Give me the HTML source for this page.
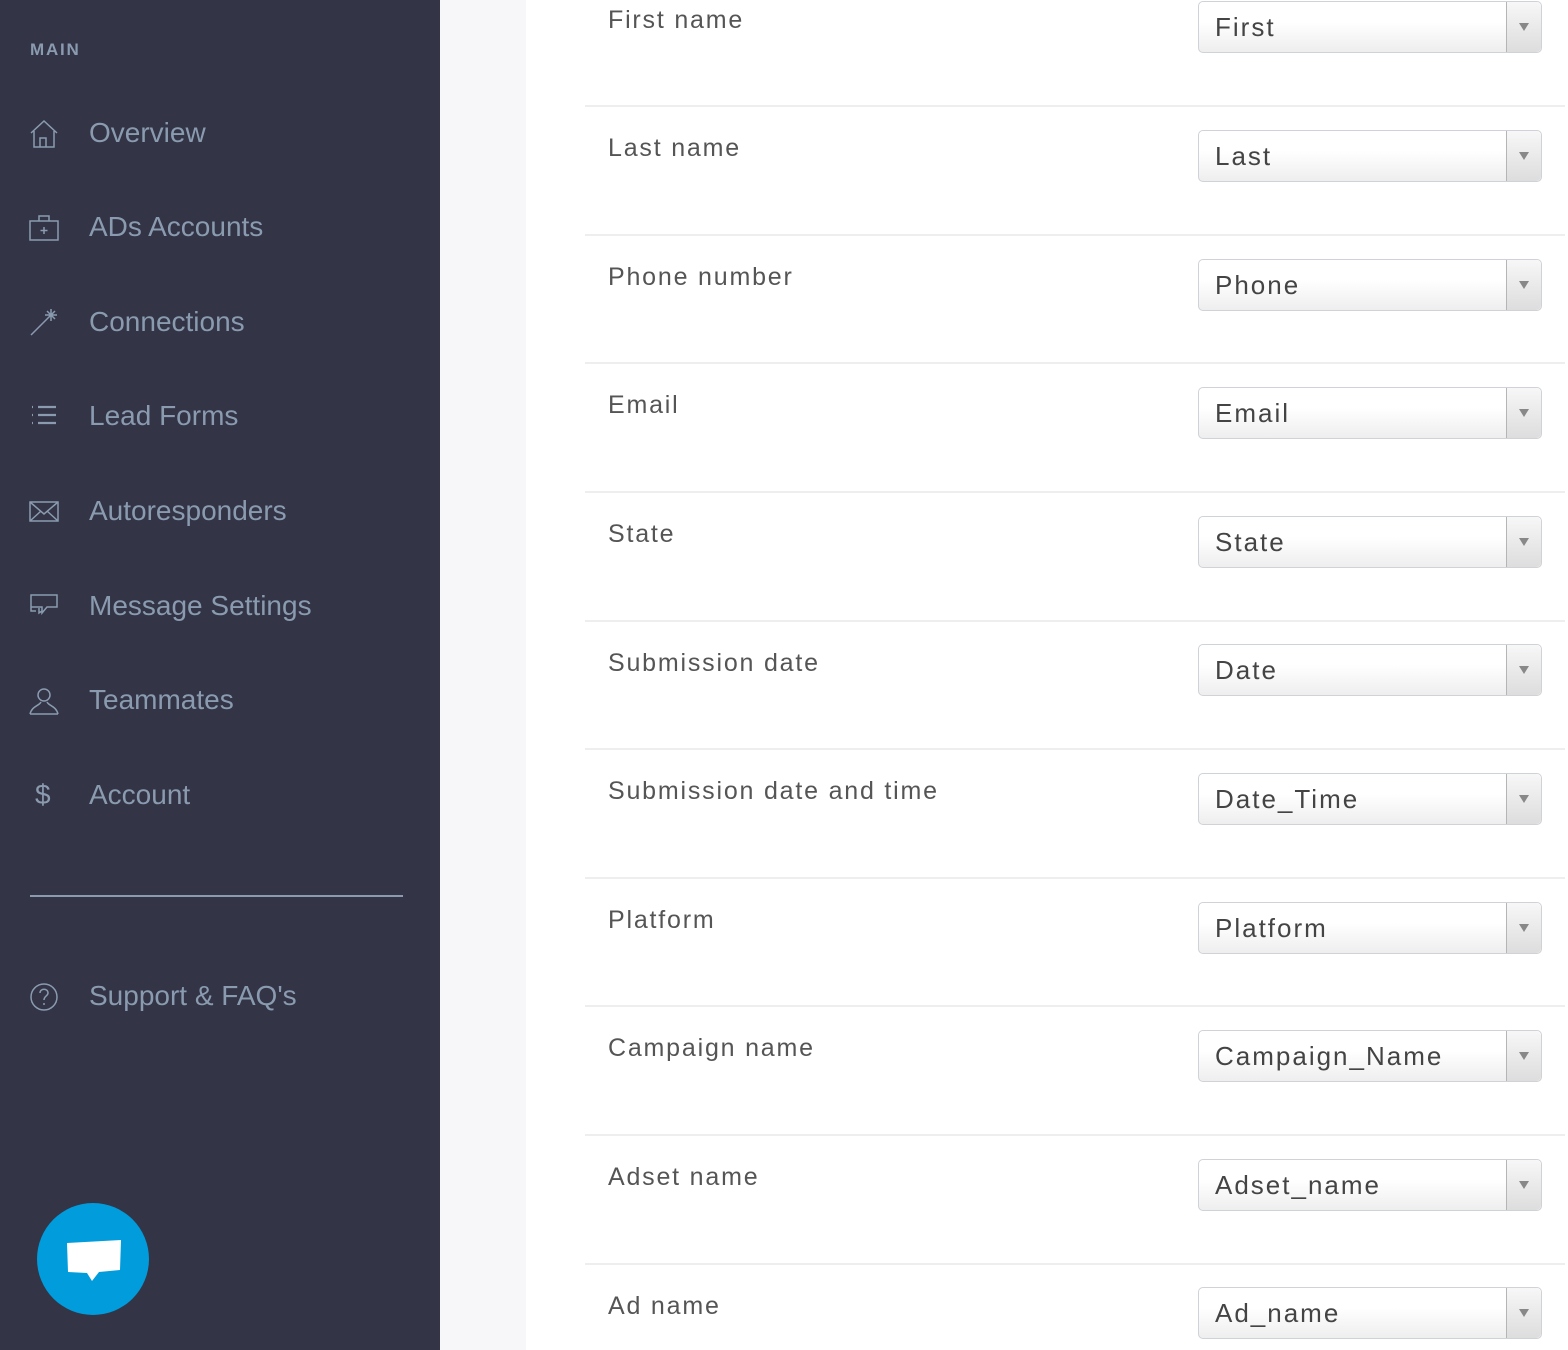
<!DOCTYPE html>
<html><head><style>
*{margin:0;padding:0;box-sizing:border-box}
body{width:1568px;height:1350px;position:relative;overflow:hidden;background:#fff;font-family:"Liberation Sans",sans-serif}
.sb{position:absolute;left:0;top:0;width:440px;height:1350px;background:#333446}
.gap{position:absolute;left:440px;top:0;width:86px;height:1350px;background:#f7f7f9}
.main-h{position:absolute;left:30px;top:40px;font-size:17px;font-weight:bold;color:#8a9bb0;letter-spacing:1.8px}
.nav{position:absolute;left:89px;font-size:28px;color:#8a9bb0;line-height:32px}
.ic{position:absolute;left:29px;width:30px;height:30px}
.ic svg{width:30px;height:30px;fill:none;stroke:#8a9bb0;stroke-width:1.5}
.hr{position:absolute;left:30px;top:895px;width:373px;height:2px;background:#8a9bb0}
.chat{position:absolute;left:37px;top:1203px;width:112px;height:112px;border-radius:50%;background:#009cdc}
.lbl{position:absolute;left:608px;font-size:25px;color:#555;line-height:30px;letter-spacing:1.8px}
.div{position:absolute;left:585px;width:980px;height:2px;background:#eeeeee}
.sel{position:absolute;left:1198px;width:344px;height:52px;border:1px solid #cfd2d6;border-radius:5px;background:linear-gradient(#fff 40%,#eeeeee);font-size:26px;color:#444;padding-left:16px;line-height:50px;letter-spacing:2px}
.sel:after{content:"";position:absolute;right:0;top:0;width:34px;height:50px;border-left:1px solid #b5b5b5;background:linear-gradient(#f7f7f7,#ddd);border-radius:0 5px 5px 0}
.sel i{position:absolute;right:12px;top:21px;width:0;height:0;border-left:5px solid transparent;border-right:5px solid transparent;border-top:8px solid #888;z-index:2}
</style></head><body>
<div class="sb"></div><div class="gap"></div>
<div class="main-h">MAIN</div>
<div class="ic" style="top:118px"><svg viewBox="0 0 30 30"><path d="M2 15L15 3L28 15M5 13V29H25V13M11 29V20H17V29"/></svg></div>
<div class="nav" style="top:117px">Overview</div>
<div class="ic" style="top:212px"><svg viewBox="0 0 30 30"><rect x="1" y="9" width="28" height="19"/><path d="M10 9V4H20V9M15 15V22M11.5 18.5H18.5"/></svg></div>
<div class="nav" style="top:211px">ADs Accounts</div>
<div class="ic" style="top:307px"><svg viewBox="0 0 30 30"><path d="M2 28L20 10M22 2V14M16 8H28M18 4L26 12M26 4L18 12"/></svg></div>
<div class="nav" style="top:306px">Connections</div>
<div class="ic" style="top:401px"><svg viewBox="0 0 30 30"><path d="M3 6H4M3 14H4M3 22H4M9 6H27M9 14H27M9 22H27" stroke-width="2.2"/></svg></div>
<div class="nav" style="top:400px">Lead Forms</div>
<div class="ic" style="top:497px"><svg viewBox="0 0 30 30"><rect x="1" y="5" width="28" height="19"/><path d="M1 5L15 17L29 5M1 24L12 14M29 24L18 14"/></svg></div>
<div class="nav" style="top:495px">Autoresponders</div>
<div class="ic" style="top:591px"><svg viewBox="0 0 30 30"><path d="M2 4H28V16H18L13 22V16H2ZM2 16V20H7M10 17V22L13 20"/></svg></div>
<div class="nav" style="top:590px">Message Settings</div>
<div class="ic" style="top:686px"><svg viewBox="0 0 30 30"><circle cx="15" cy="9" r="6"/><path d="M1 28C3 20 10 20 12 16M29 28C27 20 20 20 18 16M1 28H29"/></svg></div>
<div class="nav" style="top:684px">Teammates</div>
<div class="nav" style="top:779px;left:35px;font-size:28px">$</div>
<div class="nav" style="top:779px">Account</div>
<div class="hr"></div>
<div class="ic" style="top:982px"><svg viewBox="0 0 30 30"><circle cx="15" cy="15" r="13"/><path d="M11 11C11 6 19 6 19 11C19 14 15 14 15 18M15 21V23"/></svg></div>
<div class="nav" style="top:980px">Support &amp; FAQ's</div>
<div class="chat"><svg width="112" height="112" viewBox="0 0 112 112"><path d="M30 40L84 37L83 67L62 69L55 78L50 70L31 69Z" fill="#fff"/></svg></div>

<div class="lbl" style="top:5px">First name</div><div class="sel" style="top:1px">First<i></i></div><div class="div" style="top:105px"></div>
<div class="lbl" style="top:133px">Last name</div><div class="sel" style="top:130px">Last<i></i></div><div class="div" style="top:234px"></div>
<div class="lbl" style="top:262px">Phone number</div><div class="sel" style="top:259px">Phone<i></i></div><div class="div" style="top:362px"></div>
<div class="lbl" style="top:390px">Email</div><div class="sel" style="top:387px">Email<i></i></div><div class="div" style="top:491px"></div>
<div class="lbl" style="top:519px">State</div><div class="sel" style="top:516px">State<i></i></div><div class="div" style="top:620px"></div>
<div class="lbl" style="top:648px">Submission date</div><div class="sel" style="top:644px">Date<i></i></div><div class="div" style="top:748px"></div>
<div class="lbl" style="top:776px">Submission date and time</div><div class="sel" style="top:773px">Date_Time<i></i></div><div class="div" style="top:877px"></div>
<div class="lbl" style="top:905px">Platform</div><div class="sel" style="top:902px">Platform<i></i></div><div class="div" style="top:1005px"></div>
<div class="lbl" style="top:1033px">Campaign name</div><div class="sel" style="top:1030px">Campaign_Name<i></i></div><div class="div" style="top:1134px"></div>
<div class="lbl" style="top:1162px">Adset name</div><div class="sel" style="top:1159px">Adset_name<i></i></div><div class="div" style="top:1263px"></div>
<div class="lbl" style="top:1291px">Ad name</div><div class="sel" style="top:1287px">Ad_name<i></i></div>
</body></html>
